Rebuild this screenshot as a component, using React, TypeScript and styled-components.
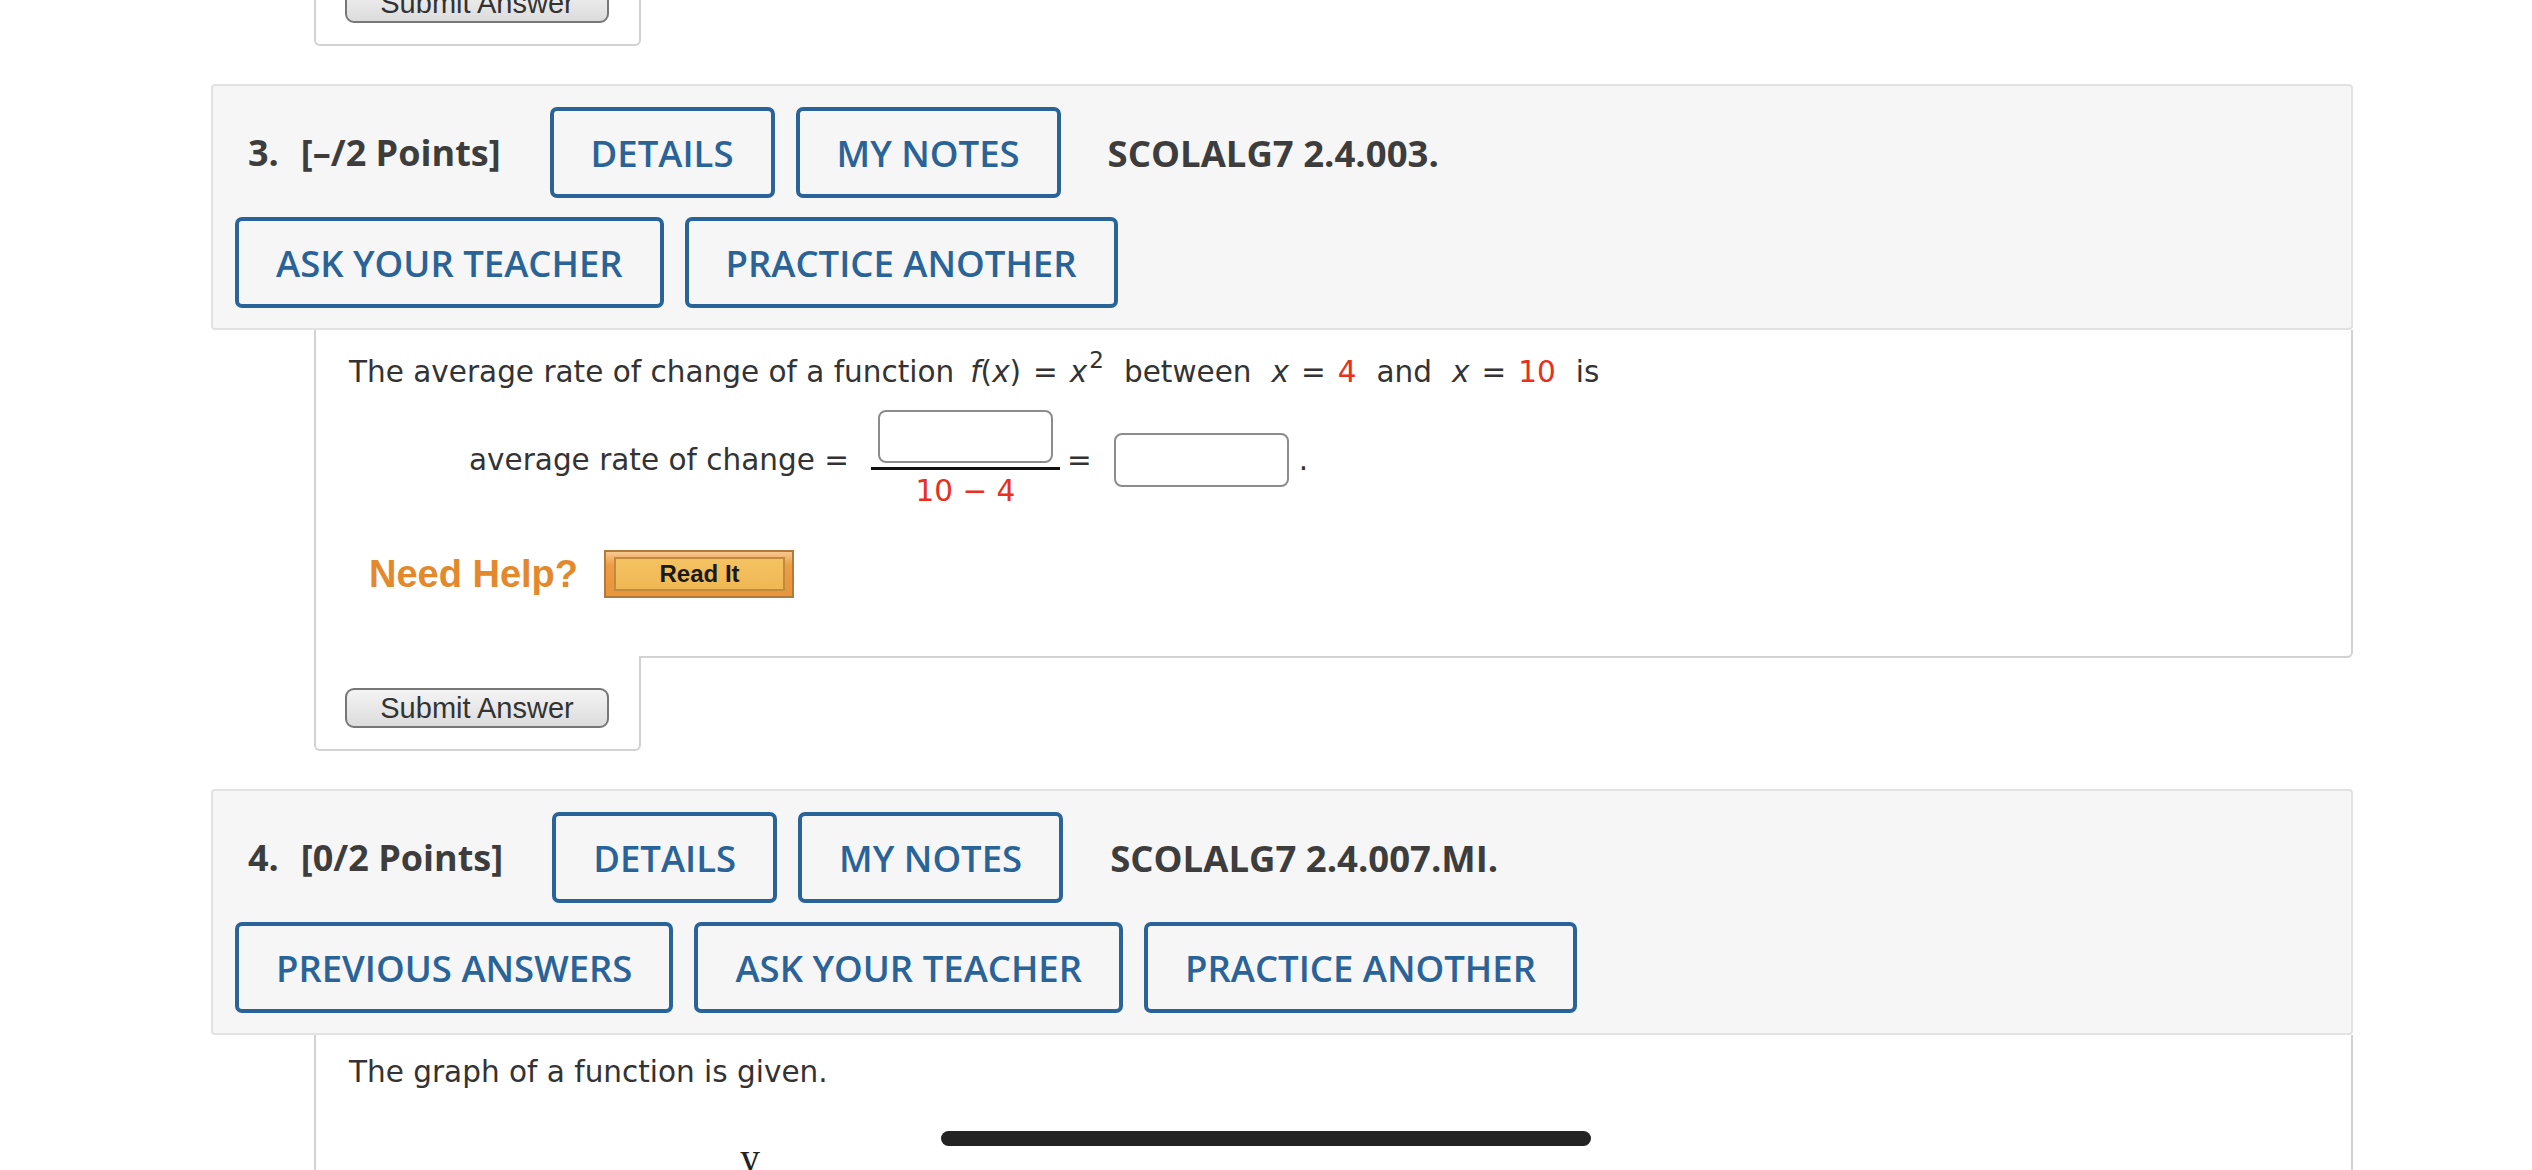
import styled, { createGlobalStyle } from 'styled-components';

const GlobalStyle = createGlobalStyle`
  html, body {
    margin: 0;
    padding: 0;
    background: #ffffff;
    overflow: hidden;
  }
  body {
    font-family: 'DejaVu Sans', Verdana, sans-serif;
  }
`;

const BLUE = '#2a6398';
const RED = '#e8301c';

export default function App() {
  return (
    <>
      <GlobalStyle />
      <Page>
        <SubmitTab $first>
          <SubmitButton>Submit Answer</SubmitButton>
        </SubmitTab>

        <Question>
          <Header>
            <HeaderRow>
              <Title>
                <QNum>3.</QNum>
                <span>[–/2 Points]</span>
              </Title>
              <ActionButton>DETAILS</ActionButton>
              <ActionButton>MY NOTES</ActionButton>
              <Code>SCOLALG7 2.4.003.</Code>
            </HeaderRow>
            <HeaderRow>
              <ActionButton>ASK YOUR TEACHER</ActionButton>
              <ActionButton>PRACTICE ANOTHER</ActionButton>
            </HeaderRow>
          </Header>
          <Body $bottom={58}>
            <Prompt $raised>
              The average rate of change of a function
              <Math $lead={16}>
                <Var>f</Var>(<Var>x</Var>)<Op>=</Op>
                <Var>x</Var>
                <Sup>2</Sup>
              </Math>
              between
              <Math>
                <Var>x</Var>
                <Op>=</Op>
                <Red>4</Red>
              </Math>
              and
              <Math>
                <Var>x</Var>
                <Op>=</Op>
                <Red>10</Red>
              </Math>
              is
            </Prompt>
            <Equation>
              <EqLabel>average rate of change =</EqLabel>
              <Fraction>
                <AnswerBox $tall={53} />
                <FractionBar />
                <Denominator>10 − 4</Denominator>
              </Fraction>
              <EqSign>=</EqSign>
              <AnswerBox $tall={54} />
              <Period>.</Period>
            </Equation>
            <HelpRow>
              <NeedHelp>Need Help?</NeedHelp>
              <ReadIt>
                <ReadItFace>Read It</ReadItFace>
              </ReadIt>
            </HelpRow>
          </Body>
          <SubmitTab>
            <SubmitButton>Submit Answer</SubmitButton>
          </SubmitTab>
        </Question>

        <Question>
          <Header>
            <HeaderRow>
              <Title>
                <QNum>4.</QNum>
                <span>[0/2 Points]</span>
              </Title>
              <ActionButton>DETAILS</ActionButton>
              <ActionButton>MY NOTES</ActionButton>
              <Code>SCOLALG7 2.4.007.MI.</Code>
            </HeaderRow>
            <HeaderRow>
              <ActionButton>PREVIOUS ANSWERS</ActionButton>
              <ActionButton>ASK YOUR TEACHER</ActionButton>
              <ActionButton>PRACTICE ANOTHER</ActionButton>
            </HeaderRow>
          </Header>
          <Body $bottom={200}>
            <Prompt>The graph of a function is given.</Prompt>
            <Graph>
              <AxisLabel>y</AxisLabel>
            </Graph>
          </Body>
        </Question>
      </Page>
      <HomeIndicator />
    </>
  );
}

const Page = styled.div`
  width: 2142px;
  padding-left: 211px;
  display: flex;
  flex-direction: column;
`;

const Question = styled.section`
  margin-top: 38px;
  display: flex;
  flex-direction: column;
`;

const Header = styled.div`
  box-sizing: border-box;
  background: #f6f6f6;
  border: 2px solid #e2e2e2;
  border-radius: 4px;
  padding: 21px 22px 20px;
  display: flex;
  flex-direction: column;
  gap: 19px;
`;

const HeaderRow = styled.div`
  display: flex;
  align-items: center;
  gap: 21px;
`;

const Title = styled.div`
  margin-left: 13px;
  margin-right: 28px;
  font-family: 'Open Sans', 'DejaVu Sans', sans-serif;
  font-weight: 700;
  font-size: 36px;
  color: #3d3d3d;
  white-space: nowrap;
`;

const QNum = styled.span`
  margin-right: 22px;
`;

const Code = styled.div`
  margin-left: 26px;
  font-family: 'Open Sans', 'DejaVu Sans', sans-serif;
  font-weight: 700;
  font-size: 36.5px;
  color: #3d3d3d;
  white-space: nowrap;
`;

const ActionButton = styled.button`
  box-sizing: border-box;
  height: 91px;
  padding: 0 37px;
  background: transparent;
  border: 4px solid ${BLUE};
  border-radius: 7px;
  color: ${BLUE};
  font-family: 'Open Sans', 'DejaVu Sans', sans-serif;
  font-weight: 600;
  font-size: 36.5px;
  white-space: nowrap;
  cursor: pointer;
`;

const Body = styled.div<{ $bottom: number }>`
  box-sizing: border-box;
  margin-left: 103px;
  background: #ffffff;
  border: 2px solid #d2d2d2;
  border-top: none;
  border-bottom-right-radius: 6px;
  padding: 15px 33px ${(p) => p.$bottom}px;
  color: #333333;
  font-family: 'DejaVu Sans', Verdana, sans-serif;
  font-size: 29.5px;
`;

const Prompt = styled.div<{ $raised?: boolean }>`
  line-height: 44px;
  margin-top: ${(p) => (p.$raised ? 5 : 0)}px;
  white-space: nowrap;
`;

const Math = styled.span<{ $lead?: number }>`
  margin: 0 20px 0 ${(p) => p.$lead ?? 20}px;
`;

const Op = styled.span`
  margin: 0 12px;
`;

const Var = styled.i`
  font-style: italic;
`;

const Sup = styled.sup`
  font-size: 0.78em;
  line-height: 0;
  vertical-align: 0;
  position: relative;
  top: -0.62em;
  margin-left: 2px;
`;

const Red = styled.span`
  color: ${RED};
`;

const Equation = styled.div`
  margin-top: 16px;
  padding-left: 120px;
  display: flex;
  align-items: center;
`;

const EqLabel = styled.span`
  line-height: 44px;
  white-space: nowrap;
`;

const Fraction = styled.div`
  margin-left: 22px;
  display: flex;
  flex-direction: column;
  align-items: center;
`;

const AnswerBox = styled.div<{ $tall: number }>`
  box-sizing: border-box;
  width: 175px;
  height: ${(p) => p.$tall}px;
  border: 2px solid #8c8c8c;
  border-radius: 8px;
  background: #ffffff;
`;

const FractionBar = styled.div`
  width: 189px;
  height: 3px;
  margin-top: 4px;
  background: #111111;
`;

const Denominator = styled.div`
  margin-top: 3px;
  line-height: 36px;
  color: ${RED};
  white-space: nowrap;
`;

const EqSign = styled.span`
  margin: 0 22px 0 7px;
  line-height: 44px;
`;

const Period = styled.span`
  margin-left: 10px;
  line-height: 44px;
`;

const HelpRow = styled.div`
  margin-top: 41px;
  padding-left: 20px;
  display: flex;
  align-items: center;
  gap: 26px;
`;

const NeedHelp = styled.span`
  font-family: 'Liberation Sans', Arial, sans-serif;
  font-weight: 700;
  font-size: 38px;
  color: #e3892c;
  white-space: nowrap;
`;

const ReadIt = styled.div`
  box-sizing: border-box;
  width: 190px;
  height: 48px;
  padding: 5px 7px 5px 8px;
  border: 2px solid #b27b3c;
  background: linear-gradient(#f7c98f 0%, #ec9d45 30%, #e8953b 100%);
  display: flex;
`;

const ReadItFace = styled.div`
  flex: 1;
  box-sizing: border-box;
  border: 2px solid #c18a3f;
  background: linear-gradient(#f4c262, #f0b854);
  display: flex;
  align-items: center;
  justify-content: center;
  font-family: 'Liberation Sans', Arial, sans-serif;
  font-weight: 700;
  font-size: 24px;
  color: #1a1a1a;
`;

const SubmitTab = styled.div<{ $first?: boolean }>`
  box-sizing: border-box;
  position: relative;
  width: 327px;
  margin-left: 103px;
  margin-top: ${(p) => (p.$first ? -49 : -2)}px;
  padding: 32px 0 21px 29px;
  background: #ffffff;
  border: 2px solid #d2d2d2;
  border-top: none;
  border-radius: 0 0 6px 6px;
`;

const SubmitButton = styled.button`
  box-sizing: border-box;
  width: 264px;
  height: 40px;
  padding: 0;
  border: 2px solid #777777;
  border-radius: 9px;
  background: linear-gradient(#f4f4f4, #dcdcdc);
  color: #333333;
  font-family: 'Liberation Sans', Arial, sans-serif;
  font-size: 29px;
  line-height: 36px;
  cursor: pointer;
`;

const Graph = styled.div`
  margin-top: 40px;
  padding-left: 391px;
  height: 120px;
`;

const AxisLabel = styled.span`
  font-family: 'Liberation Serif', 'Times New Roman', serif;
  font-size: 40px;
  color: #222222;
`;

const HomeIndicator = styled.div`
  position: fixed;
  left: 50%;
  bottom: 24px;
  transform: translateX(-50%);
  width: 650px;
  height: 15px;
  border-radius: 8px;
  background: #232323;
`;
